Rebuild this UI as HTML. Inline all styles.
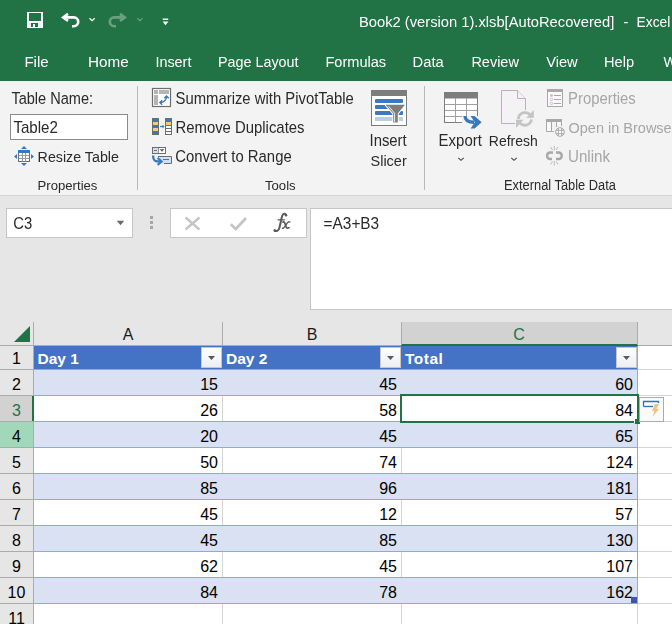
<!DOCTYPE html>
<html><head><meta charset="utf-8">
<style>
*{margin:0;padding:0;box-sizing:border-box}
html,body{width:672px;height:624px;overflow:hidden;background:#fff;font-family:"Liberation Sans",sans-serif}
.a{position:absolute;white-space:nowrap}
svg.a{overflow:visible}
</style></head><body>
<div class="a" style="left:0px;top:0px;width:672px;height:81px;background:#217346;"></div>
<div class="a" style="left:0px;top:81px;width:672px;height:115px;background:#f3f3f3;"></div>
<div class="a" style="left:0px;top:196px;width:672px;height:126px;background:#e6e6e6;"></div>
<div class="a" style="left:0px;top:195px;width:672px;height:1px;background:#d4d4d4;"></div>
<div class="a" style="left:137px;top:86px;width:1px;height:104px;background:#b8b8b8;"></div>
<div class="a" style="left:424px;top:86px;width:1px;height:104px;background:#b8b8b8;"></div>
<div class="a" style="left:10px;top:114px;width:118px;height:26px;background:#fff;border:1px solid #8a8a8a"></div>
<div class="a" style="left:6px;top:208px;width:127px;height:30px;background:#fff;border:1px solid #c6c6c6"></div>
<svg class="a" style="left:116px;top:220px" width="9" height="6" viewBox="0 0 9 6"><polygon points="0.8,0.8 8.2,0.8 4.5,5.2" fill="#6a6a6a"/></svg>
<div class="a" style="left:150px;top:216px;width:3px;height:3px;background:#a6a6a6;"></div>
<div class="a" style="left:150px;top:221px;width:3px;height:3px;background:#a6a6a6;"></div>
<div class="a" style="left:150px;top:226px;width:3px;height:3px;background:#a6a6a6;"></div>
<div class="a" style="left:170px;top:208px;width:137px;height:30px;background:#fff;border:1px solid #c6c6c6"></div>
<svg class="a" style="left:184px;top:216px" width="17" height="15" viewBox="0 0 17 15"><path d="M1.5 1.5 L15.5 13.5 M15.5 1.5 L1.5 13.5" stroke="#c6c6c6" stroke-width="2.5" fill="none"/></svg>
<svg class="a" style="left:229px;top:216px" width="19" height="15" viewBox="0 0 19 15"><path d="M1.8 8.2 L6.8 13 L17 2" stroke="#c4c4c4" stroke-width="2.7" fill="none"/></svg>
<svg class="a" style="left:266px;top:208px" width="30" height="28" viewBox="0 0 30 28"><g transform="translate(-266,-208)" fill="none" stroke="#5a5a5a" stroke-linecap="round"><path d="M286.2 215.2 C285.6 213.4 283.2 213.2 282.2 215.8 C281.2 218.5 280.2 226 279 229 C278.2 231 276.3 231.6 274.8 230.6" stroke-width="2"/><path d="M278 219.8 H284.4" stroke-width="1.2"/><path d="M283 222 C284.2 221.4 284.8 222.6 285.3 224.4 L286.2 227 C286.6 228.4 287.8 228.6 289 227.6" stroke-width="1.7"/><path d="M290 222 C289 221.4 288 222 287 223.4 L284.6 226.8 C283.6 228.2 282.8 228.6 282.4 228.2" stroke-width="1.3"/></g><circle cx="20" cy="7.2" r="1.2" fill="#5a5a5a"/><circle cx="8.8" cy="22.6" r="1.3" fill="#5a5a5a"/></svg>
<div class="a" style="left:310px;top:208px;width:362px;height:102px;background:#fff;border:1px solid #c6c6c6;border-right:none"></div>
<div class="a" style="left:0;top:0;width:672px;height:200px;filter:grayscale(1)">
<div class="a" style="left:359.0px;top:14px;font-size:14.73px;color:#fff;transform:scaleY(1.04);transform-origin:0 13px;">Book2 (version 1).xlsb[AutoRecovered]</div>
<div class="a" style="left:623.5px;top:14px;font-size:14.7px;color:#fff;">-</div>
<div class="a" style="left:636.6px;top:15px;font-size:13.79px;color:#fff;transform:scaleY(1.04);transform-origin:0 12px;">Excel</div>
<div class="a" style="left:24.4px;top:53px;font-size:15.0px;color:#fff;">File</div>
<div class="a" style="left:88.0px;top:53px;font-size:15.25px;color:#fff;">Home</div>
<div class="a" style="left:155.4px;top:54px;font-size:14.41px;color:#fff;">Insert</div>
<div class="a" style="left:218.0px;top:54px;font-size:14.34px;color:#fff;">Page Layout</div>
<div class="a" style="left:325.4px;top:54px;font-size:14.59px;color:#fff;">Formulas</div>
<div class="a" style="left:412.6px;top:54px;font-size:14.72px;color:#fff;">Data</div>
<div class="a" style="left:471.4px;top:54px;font-size:14.49px;color:#fff;">Review</div>
<div class="a" style="left:546.2px;top:54px;font-size:14.66px;color:#fff;">View</div>
<div class="a" style="left:604.0px;top:54px;font-size:14.6px;color:#fff;">Help</div>
<div class="a" style="left:663.5px;top:54px;font-size:14.0px;color:#fff;">W</div>
<div class="a" style="left:11.4px;top:91px;font-size:14.56px;color:#2a2a2a;transform:scaleY(1.07);transform-origin:0 13px;">Table Name:</div>
<div class="a" style="left:37.6px;top:149px;font-size:14.26px;color:#2a2a2a;transform:scaleY(1.07);transform-origin:0 13px;">Resize Table</div>
<div class="a" style="left:37.6px;top:178px;font-size:13.13px;color:#2a2a2a;">Properties</div>
<div class="a" style="left:175.5px;top:91px;font-size:14.86px;color:#2a2a2a;transform:scaleY(1.07);transform-origin:0 13px;">Summarize with PivotTable</div>
<div class="a" style="left:175.5px;top:120px;font-size:14.88px;color:#2a2a2a;transform:scaleY(1.07);transform-origin:0 13px;">Remove Duplicates</div>
<div class="a" style="left:175.2px;top:149px;font-size:14.87px;color:#2a2a2a;transform:scaleY(1.07);transform-origin:0 13px;">Convert to Range</div>
<div class="a" style="left:265.0px;top:178px;font-size:13.14px;color:#2a2a2a;">Tools</div>
<div class="a" style="left:369.5px;top:133px;font-size:14.89px;color:#2a2a2a;transform:scaleY(1.07);transform-origin:0 13px;">Insert</div>
<div class="a" style="left:370.5px;top:153px;font-size:14.49px;color:#2a2a2a;transform:scaleY(1.07);transform-origin:0 13px;">Slicer</div>
<div class="a" style="left:438.6px;top:132px;font-size:14.97px;color:#2a2a2a;transform:scaleY(1.07);transform-origin:0 14px;">Export</div>
<div class="a" style="left:488.8px;top:133px;font-size:13.97px;color:#2a2a2a;transform:scaleY(1.07);transform-origin:0 13px;">Refresh</div>
<div class="a" style="left:568.0px;top:91px;font-size:14.89px;color:#a6a6a6;transform:scaleY(1.07);transform-origin:0 13px;">Properties</div>
<div class="a" style="left:568.5px;top:120px;font-size:14.5px;color:#a6a6a6;transform:scaleY(1.07);transform-origin:0 13px;">Open in Browser</div>
<div class="a" style="left:568.0px;top:148px;font-size:15.17px;color:#a6a6a6;transform:scaleY(1.07);transform-origin:0 14px;">Unlink</div>
<div class="a" style="left:504.0px;top:178px;font-size:12.86px;color:#2a2a2a;transform:scaleY(1.08);transform-origin:0 12px;">External Table Data</div>
</div>
<div class="a" style="left:13.4px;top:119px;font-size:15.1px;color:#2a2a2a;transform:scaleY(1.07);transform-origin:0 14px;">Table2</div>
<div class="a" style="left:13.2px;top:216px;font-size:14.85px;color:#2a2a2a;transform:scaleY(1.07);transform-origin:0 13px;">C3</div>
<div class="a" style="left:323.6px;top:215px;font-size:15.39px;color:#2a2a2a;transform:scaleY(1.07);transform-origin:0 14px;">=A3+B3</div><!-- QAT icons -->
<svg class="a" style="left:0;top:0" width="200" height="40" viewBox="0 0 200 40">
<rect x="27" y="12" width="16" height="16" fill="#fff"/>
<rect x="29" y="13" width="12" height="8" fill="#217346"/>
<rect x="29" y="23" width="12" height="4" fill="#f0f0f0"/>
<rect x="31" y="23" width="7" height="4" fill="#217346"/>
<rect x="33" y="24" width="2" height="3" fill="#fff"/>
<polyline points="68,13.9 63.2,17.4 68,20.9" stroke="#fff" stroke-width="2.6" fill="none"/>
<path d="M63 17.4 H73.8 A4.4 4.4 0 0 1 73.8 26.2 H72" stroke="#fff" stroke-width="2.6" fill="none"/>
<polyline points="89.5,18.3 92.1,20.6 94.7,18.3" stroke="#fff" stroke-width="1.2" fill="none"/>
<g opacity="0.32">
<polyline points="120,13.9 124.8,17.4 120,20.9" stroke="#fff" stroke-width="2.6" fill="none"/>
<path d="M125 17.4 H114.2 A4.4 4.4 0 0 0 114.2 26.2 H116" stroke="#fff" stroke-width="2.6" fill="none"/>
<polyline points="137.3,18.3 139.9,20.6 142.5,18.3" stroke="#fff" stroke-width="1.2" fill="none"/>
</g>
<rect x="162.8" y="18.5" width="5.4" height="1.5" fill="#fff"/>
<polygon points="162.6,21.6 168.4,21.6 165.5,25.2" fill="#fff"/>
</svg>

<!-- ribbon icons -->
<svg class="a" style="left:0;top:81px" width="672" height="114" viewBox="0 81 672 114">
<!-- Resize table -->
<rect x="18.5" y="150.5" width="11" height="11" fill="#fff" stroke="#6d6d6d" stroke-width="1"/>
<rect x="18" y="150" width="12" height="3" fill="#3b78bb"/>
<path d="M18.5 155.5 H29.5 M18.5 158.5 H29.5 M22.5 153 V161.5 M25.5 153 V161.5" stroke="#9a9a9a" stroke-width="1"/>
<polygon points="21,149 24,146 27,149" fill="#3b78bb"/>
<polygon points="21,163 24,166 27,163" fill="#3b78bb"/>
<polygon points="17,154 14,156.5 17,159" fill="#3b78bb"/>
<polygon points="31,154 34,156.5 31,159" fill="#3b78bb"/>
<!-- PivotTable -->
<rect x="152.5" y="88.5" width="18" height="18" fill="#fff" stroke="#6d6d6d" stroke-width="1.2"/>
<rect x="154" y="90" width="4" height="4" fill="#b4b4b4"/>
<rect x="159" y="90" width="10" height="4" fill="#b4b4b4"/>
<rect x="154" y="95" width="4" height="10" fill="#b4b4b4"/>
<path d="M160.3 102.6 A6.2 6.2 0 0 0 166.5 96.4" stroke="#3b78bb" stroke-width="1.4" fill="none"/>
<polyline points="162.2,100.4 160,102.6 162.2,104.8" stroke="#3b78bb" stroke-width="1.5" fill="none"/>
<polyline points="164.3,98.2 166.5,96 168.7,98.2" stroke="#3b78bb" stroke-width="1.5" fill="none"/>
<!-- Remove duplicates -->
<rect x="152.5" y="118.5" width="6" height="16" fill="#3b78bb" stroke="#6d6d6d" stroke-width="1"/>
<rect x="153" y="122" width="5" height="3" fill="#f8ca80"/>
<rect x="153" y="128" width="5" height="3" fill="#f8ca80"/>
<rect x="165.5" y="118.5" width="6" height="16" fill="#fff" stroke="#6d6d6d" stroke-width="1"/>
<rect x="166" y="119" width="5" height="3" fill="#3b78bb"/>
<rect x="166" y="122" width="5" height="3" fill="#f8ca80"/>
<path d="M165.5 125.5 H171.5 M165.5 128.5 H171.5 M165.5 131.5 H171.5" stroke="#6d6d6d" stroke-width="1"/>
<path d="M160 126.5 H163" stroke="#3b78bb" stroke-width="1.2"/>
<polygon points="162.5,124.5 164.5,126.5 162.5,128.5" fill="#3b78bb"/>
<!-- Convert to range -->
<rect x="152.5" y="147.5" width="13" height="6" fill="#fff" stroke="#6d6d6d" stroke-width="1"/>
<rect x="153" y="148" width="5" height="5" fill="#cde0f5"/>
<path d="M158.5 148 V153" stroke="#9a9a9a" stroke-width="1"/>
<path d="M154 150.5 H157" stroke="#6d6d6d" stroke-width="1"/>
<polygon points="159.7,149 164.3,149 162,152" fill="#6d6d6d"/>
<rect x="160" y="156.5" width="11.5" height="7" fill="#cde0f5"/>
<path d="M158 156.5 H171.5 V163.5 H164" stroke="#6d6d6d" stroke-width="1" fill="none"/>
<path d="M163 159.5 H169" stroke="#6d6d6d" stroke-width="1"/>
<path d="M153.2 155.6 V157 A4.4 4.4 0 0 0 157.6 161.4 H161" stroke="#3b78bb" stroke-width="2.3" fill="none"/>
<polyline points="157.6,157.9 161.6,161.4 157.6,164.9" stroke="#3b78bb" stroke-width="2.1" fill="none"/>
<!-- Insert slicer -->
<rect x="371.5" y="90.5" width="35" height="35" fill="#fff" stroke="#7a7a7a" stroke-width="1"/>
<rect x="371" y="90" width="36" height="6" fill="#7d7d7d"/>
<rect x="375" y="99" width="28" height="4" rx="1" fill="#3c7ac0"/>
<rect x="375" y="105" width="28" height="4" rx="1" fill="#3c7ac0"/>
<rect x="375" y="111" width="28" height="4" rx="1" fill="#3c7ac0"/>
<rect x="375" y="117" width="28" height="4" fill="#b9cde5"/>
<polygon points="385.5,104.8 405,104.8 397.8,113.6 397.8,122.6 393.2,122.6 393.2,113.6" fill="#7d7d7d" stroke="#fff" stroke-width="1.8" stroke-linejoin="round"/>
<polygon points="385.5,104.8 405,104.8 397.8,113.6 397.8,122.6 393.2,122.6 393.2,113.6" fill="#7d7d7d"/>
<polyline points="388.6,106.2 394.6,113.3 394.6,121.8" stroke="#fff" stroke-width="0.9" fill="none"/>
<!-- Export -->
<rect x="444.5" y="92.5" width="33" height="30" fill="#fff" stroke="#7d7d7d" stroke-width="1"/>
<rect x="444" y="92" width="34" height="6.5" fill="#7d7d7d"/>
<path d="M455.5 98 V122.5 M466.5 98 V116 M445 104.5 H477.5 M445 110.5 H477.5 M445 116.5 H463" stroke="#a0a0a0" stroke-width="1"/>
<rect x="462" y="116" width="20" height="13" fill="#f3f3f3"/>
<rect x="477" y="110" width="1" height="6" fill="#7d7d7d"/>
<path d="M465 116 Q465.2 122.3 474 122.3" stroke="#3b78bb" stroke-width="3.4" fill="none"/>
<polygon points="470.6,116 474.6,116 481.6,122.2 474.6,128.4 470.6,128.4 474.8,122.2" fill="#3b78bb"/>
<!-- Refresh -->
<path d="M501.5 90.5 H517.5 L525.5 98.5 V110 M501.5 90.5 V123.5 H515" stroke="#b4b4b4" stroke-width="1" fill="#f6f1f6"/>
<path d="M517.5 90.5 V98.5 H525.5" stroke="#b4b4b4" stroke-width="1" fill="#f6f1f6"/>
<path d="M518.3 119 A6.6 6.6 0 0 1 531.3 117.6" stroke="#c4c4c4" stroke-width="2.9" fill="none"/>
<path d="M531.5 119.5 A6.6 6.6 0 0 1 518.5 120" stroke="#c4c4c4" stroke-width="2.9" fill="none"/>
<polygon points="533.8,110 533.8,117.8 526.3,117.8" fill="#c4c4c4"/>
<polygon points="516,128 516,119.7 523.5,119.7" fill="#c4c4c4"/>
<!-- chevrons export/refresh -->
<polyline points="458.3,157.8 461,160.3 463.7,157.8" stroke="#444" stroke-width="1.1" fill="none"/>
<polyline points="511.3,157.8 514,160.3 516.7,157.8" stroke="#444" stroke-width="1.1" fill="none"/>
<!-- Properties (disabled) -->
<rect x="547.5" y="89.5" width="15" height="17" fill="#fcf8fc" stroke="#a8a8a8" stroke-width="1"/>
<rect x="547" y="89" width="16" height="3" fill="#a8a8a8"/>
<circle cx="551.5" cy="95.5" r="1.3" fill="#b8b8b8"/>
<circle cx="551.5" cy="99.5" r="1.2" stroke="#b8b8b8" stroke-width="0.8" fill="none"/>
<circle cx="551.5" cy="103.5" r="1.2" stroke="#b8b8b8" stroke-width="0.8" fill="none"/>
<path d="M554 95.5 H561 M554 99.5 H561 M554 103.5 H561" stroke="#a8a8a8" stroke-width="1"/>
<!-- Open in browser -->
<path d="M546.5 119.5 H561.5 V126 M546.5 119.5 V131.5 H554" stroke="#a8a8a8" stroke-width="1" fill="#fcf8fc"/>
<rect x="546" y="119" width="16" height="3" fill="#a8a8a8"/>
<path d="M551.5 122 V131 M556.5 122 V127" stroke="#a8a8a8" stroke-width="1"/>
<circle cx="560" cy="132" r="5.2" fill="#f3f3f3"/>
<circle cx="560" cy="132" r="4.3" fill="#fff" stroke="#a8a8a8" stroke-width="1"/>
<path d="M556 130.3 H564 M556 133.7 H564 M558.3 128 V136 M561.7 128 V136" stroke="#a8a8a8" stroke-width="1"/>
<!-- Unlink -->
<path d="M553 152.5 H549.8 A3.3 3.3 0 0 0 549.8 159 H552" stroke="#a8a8a8" stroke-width="2.4" fill="none"/>
<path d="M556 152.5 H559 A3.3 3.3 0 0 1 559 159 H556" stroke="#a8a8a8" stroke-width="2.4" fill="none"/>
<path d="M554.3 146 V150.5 M550.5 147 L552.5 150 M558 147 L556.2 150 M554.3 161 V165.5 M550.5 164.5 L552.5 161.5 M558 164.5 L556.2 161.5" stroke="#b4b4b4" stroke-width="0.9"/>
</svg>
<div class="a" style="left:0px;top:322px;width:672px;height:302px;background:#ffffff;"></div>
<div class="a" style="left:0px;top:322px;width:672px;height:23px;background:#e6e6e6;"></div>
<div class="a" style="left:0px;top:345px;width:672px;height:1px;background:#ababab;"></div>
<div class="a" style="left:0px;top:346px;width:33px;height:278px;background:#e6e6e6;"></div>
<div class="a" style="left:33px;top:322px;width:1px;height:302px;background:#ababab;"></div>
<div class="a" style="left:402px;top:322px;width:235px;height:22px;background:#d2d2d2;"></div>
<div class="a" style="left:401px;top:344px;width:237px;height:2px;background:#217346;"></div>
<div class="a" style="left:222px;top:322px;width:1px;height:23px;background:#ababab;"></div>
<div class="a" style="left:401px;top:322px;width:1px;height:23px;background:#ababab;"></div>
<div class="a" style="left:637px;top:322px;width:1px;height:23px;background:#ababab;"></div>
<svg class="a" style="left:0;top:322px" width="33" height="23"><polygon points="14,20 30,20 30,4" fill="#217346"/></svg>
<div class="a" style="left:108px;top:326px;width:40px;text-align:center;font-size:16px;color:#1a1a1a">A</div>
<div class="a" style="left:292px;top:326px;width:40px;text-align:center;font-size:16px;color:#1a1a1a">B</div>
<div class="a" style="left:499px;top:326px;width:40px;text-align:center;font-size:16px;color:#217346">C</div>
<div class="a" style="left:222px;top:346px;width:1px;height:278px;background:#d4d4d4;"></div>
<div class="a" style="left:401px;top:346px;width:1px;height:278px;background:#d4d4d4;"></div>
<div class="a" style="left:637px;top:346px;width:1px;height:278px;background:#d4d4d4;"></div>
<div class="a" style="left:638px;top:369px;width:34px;height:1px;background:#d4d4d4;"></div>
<div class="a" style="left:638px;top:395px;width:34px;height:1px;background:#d4d4d4;"></div>
<div class="a" style="left:638px;top:421px;width:34px;height:1px;background:#d4d4d4;"></div>
<div class="a" style="left:638px;top:447px;width:34px;height:1px;background:#d4d4d4;"></div>
<div class="a" style="left:638px;top:473px;width:34px;height:1px;background:#d4d4d4;"></div>
<div class="a" style="left:638px;top:499px;width:34px;height:1px;background:#d4d4d4;"></div>
<div class="a" style="left:638px;top:525px;width:34px;height:1px;background:#d4d4d4;"></div>
<div class="a" style="left:638px;top:551px;width:34px;height:1px;background:#d4d4d4;"></div>
<div class="a" style="left:638px;top:577px;width:34px;height:1px;background:#d4d4d4;"></div>
<div class="a" style="left:638px;top:603px;width:34px;height:1px;background:#d4d4d4;"></div>
<div class="a" style="left:638px;top:629px;width:34px;height:1px;background:#d4d4d4;"></div>
<div class="a" style="left:0px;top:369px;width:33px;height:1px;background:#ababab;"></div>
<div class="a" style="left:0px;top:395px;width:33px;height:1px;background:#ababab;"></div>
<div class="a" style="left:0px;top:421px;width:33px;height:1px;background:#ababab;"></div>
<div class="a" style="left:0px;top:447px;width:33px;height:1px;background:#ababab;"></div>
<div class="a" style="left:0px;top:473px;width:33px;height:1px;background:#ababab;"></div>
<div class="a" style="left:0px;top:499px;width:33px;height:1px;background:#ababab;"></div>
<div class="a" style="left:0px;top:525px;width:33px;height:1px;background:#ababab;"></div>
<div class="a" style="left:0px;top:551px;width:33px;height:1px;background:#ababab;"></div>
<div class="a" style="left:0px;top:577px;width:33px;height:1px;background:#ababab;"></div>
<div class="a" style="left:0px;top:603px;width:33px;height:1px;background:#ababab;"></div>
<div class="a" style="left:0px;top:629px;width:33px;height:1px;background:#ababab;"></div>
<div class="a" style="left:34px;top:346px;width:603px;height:23px;background:#4472c4;"></div>
<div class="a" style="left:34px;top:369px;width:604px;height:1px;background:#8ea9db;"></div>
<div class="a" style="left:34px;top:370px;width:603px;height:25px;background:#d9e1f2;"></div>
<div class="a" style="left:34px;top:395px;width:604px;height:1px;background:#8ea9db;"></div>
<div class="a" style="left:34px;top:421px;width:604px;height:1px;background:#8ea9db;"></div>
<div class="a" style="left:34px;top:422px;width:603px;height:25px;background:#d9e1f2;"></div>
<div class="a" style="left:34px;top:447px;width:604px;height:1px;background:#8ea9db;"></div>
<div class="a" style="left:34px;top:473px;width:604px;height:1px;background:#8ea9db;"></div>
<div class="a" style="left:34px;top:474px;width:603px;height:25px;background:#d9e1f2;"></div>
<div class="a" style="left:34px;top:499px;width:604px;height:1px;background:#8ea9db;"></div>
<div class="a" style="left:34px;top:525px;width:604px;height:1px;background:#8ea9db;"></div>
<div class="a" style="left:34px;top:526px;width:603px;height:25px;background:#d9e1f2;"></div>
<div class="a" style="left:34px;top:551px;width:604px;height:1px;background:#8ea9db;"></div>
<div class="a" style="left:34px;top:577px;width:604px;height:1px;background:#8ea9db;"></div>
<div class="a" style="left:34px;top:578px;width:603px;height:25px;background:#d9e1f2;"></div>
<div class="a" style="left:34px;top:603px;width:604px;height:1px;background:#8ea9db;"></div>
<div class="a" style="left:637px;top:346px;width:1px;height:258px;background:#8ea9db;"></div>
<div class="a" style="left:0px;top:396px;width:32px;height:25px;background:#d2d2d2;"></div>
<div class="a" style="left:32px;top:396px;width:2px;height:25px;background:#217346;"></div>
<div class="a" style="left:0px;top:422px;width:33px;height:25px;background:#a0d8b9;"></div>
<div class="a" style="left:0;top:347px;width:33px;height:23px;line-height:23px;text-align:center;font-size:16px;color:#000">1</div>
<div class="a" style="left:0;top:372px;width:33px;height:25px;line-height:25px;text-align:center;font-size:16px;color:#000">2</div>
<div class="a" style="left:0;top:398px;width:33px;height:25px;line-height:25px;text-align:center;font-size:16px;color:#217346">3</div>
<div class="a" style="left:0;top:424px;width:33px;height:25px;line-height:25px;text-align:center;font-size:16px;color:#000">4</div>
<div class="a" style="left:0;top:450px;width:33px;height:25px;line-height:25px;text-align:center;font-size:16px;color:#000">5</div>
<div class="a" style="left:0;top:476px;width:33px;height:25px;line-height:25px;text-align:center;font-size:16px;color:#000">6</div>
<div class="a" style="left:0;top:502px;width:33px;height:25px;line-height:25px;text-align:center;font-size:16px;color:#000">7</div>
<div class="a" style="left:0;top:528px;width:33px;height:25px;line-height:25px;text-align:center;font-size:16px;color:#000">8</div>
<div class="a" style="left:0;top:554px;width:33px;height:25px;line-height:25px;text-align:center;font-size:16px;color:#000">9</div>
<div class="a" style="left:0;top:580px;width:33px;height:25px;line-height:25px;text-align:center;font-size:16px;color:#000">10</div>
<div class="a" style="left:0;top:606px;width:33px;height:25px;line-height:25px;text-align:center;font-size:16px;color:#000">11</div>
<div class="a" style="left:37.5px;top:350px;font-size:15.5px;font-weight:bold;color:#fff;letter-spacing:0px">Day 1</div>
<div class="a" style="left:226px;top:350px;font-size:15.5px;font-weight:bold;color:#fff;letter-spacing:0px">Day 2</div>
<div class="a" style="left:405px;top:350px;font-size:15.5px;font-weight:bold;color:#fff;letter-spacing:0.5px">Total</div>
<div class="a" style="left:201px;top:347px;width:21px;height:21px;border:1px solid #c6c6c6;background:linear-gradient(#ffffff,#eceef2)"></div>
<svg class="a" style="left:208px;top:356px" width="7" height="4"><polygon points="0,0 7,0 3.5,4" fill="#595959"/></svg>
<div class="a" style="left:380px;top:347px;width:21px;height:21px;border:1px solid #c6c6c6;background:linear-gradient(#ffffff,#eceef2)"></div>
<svg class="a" style="left:387px;top:356px" width="7" height="4"><polygon points="0,0 7,0 3.5,4" fill="#595959"/></svg>
<div class="a" style="left:616px;top:347px;width:21px;height:21px;border:1px solid #c6c6c6;background:linear-gradient(#ffffff,#eceef2)"></div>
<svg class="a" style="left:623px;top:356px" width="7" height="4"><polygon points="0,0 7,0 3.5,4" fill="#595959"/></svg>
<div class="a" style="left:118px;top:376px;width:100px;text-align:right;font-size:16px;color:#000">15</div>
<div class="a" style="left:297px;top:376px;width:100px;text-align:right;font-size:16px;color:#000">45</div>
<div class="a" style="left:533px;top:376px;width:100px;text-align:right;font-size:16px;color:#000">60</div>
<div class="a" style="left:118px;top:402px;width:100px;text-align:right;font-size:16px;color:#000">26</div>
<div class="a" style="left:297px;top:402px;width:100px;text-align:right;font-size:16px;color:#000">58</div>
<div class="a" style="left:533px;top:402px;width:100px;text-align:right;font-size:16px;color:#000">84</div>
<div class="a" style="left:118px;top:428px;width:100px;text-align:right;font-size:16px;color:#000">20</div>
<div class="a" style="left:297px;top:428px;width:100px;text-align:right;font-size:16px;color:#000">45</div>
<div class="a" style="left:533px;top:428px;width:100px;text-align:right;font-size:16px;color:#000">65</div>
<div class="a" style="left:118px;top:454px;width:100px;text-align:right;font-size:16px;color:#000">50</div>
<div class="a" style="left:297px;top:454px;width:100px;text-align:right;font-size:16px;color:#000">74</div>
<div class="a" style="left:533px;top:454px;width:100px;text-align:right;font-size:16px;color:#000">124</div>
<div class="a" style="left:118px;top:480px;width:100px;text-align:right;font-size:16px;color:#000">85</div>
<div class="a" style="left:297px;top:480px;width:100px;text-align:right;font-size:16px;color:#000">96</div>
<div class="a" style="left:533px;top:480px;width:100px;text-align:right;font-size:16px;color:#000">181</div>
<div class="a" style="left:118px;top:506px;width:100px;text-align:right;font-size:16px;color:#000">45</div>
<div class="a" style="left:297px;top:506px;width:100px;text-align:right;font-size:16px;color:#000">12</div>
<div class="a" style="left:533px;top:506px;width:100px;text-align:right;font-size:16px;color:#000">57</div>
<div class="a" style="left:118px;top:532px;width:100px;text-align:right;font-size:16px;color:#000">45</div>
<div class="a" style="left:297px;top:532px;width:100px;text-align:right;font-size:16px;color:#000">85</div>
<div class="a" style="left:533px;top:532px;width:100px;text-align:right;font-size:16px;color:#000">130</div>
<div class="a" style="left:118px;top:558px;width:100px;text-align:right;font-size:16px;color:#000">62</div>
<div class="a" style="left:297px;top:558px;width:100px;text-align:right;font-size:16px;color:#000">45</div>
<div class="a" style="left:533px;top:558px;width:100px;text-align:right;font-size:16px;color:#000">107</div>
<div class="a" style="left:118px;top:584px;width:100px;text-align:right;font-size:16px;color:#000">84</div>
<div class="a" style="left:297px;top:584px;width:100px;text-align:right;font-size:16px;color:#000">78</div>
<div class="a" style="left:533px;top:584px;width:100px;text-align:right;font-size:16px;color:#000">162</div>
<div class="a" style="left:400px;top:394px;width:239px;height:29px;border:2px solid #217346"></div>
<div class="a" style="left:634px;top:419px;width:2px;height:4px;background:#ffffff;"></div>
<div class="a" style="left:635px;top:419px;width:5px;height:5px;background:#217346;"></div>
<div class="a" style="left:631px;top:597px;width:6px;height:6px;background:#4351b2;"></div>
<div class="a" style="left:639px;top:397px;width:25px;height:25px;border:1px solid #ababab;background:#fafafa"></div>
<svg class="a" style="left:640px;top:398px" width="23" height="23"><path d="M3.5 8.5 V3.5 H18.5 V5" fill="none" stroke="#2e75b6" stroke-width="1.3"/><path d="M3.5 8.5 H13" fill="none" stroke="#2e75b6" stroke-width="1.3"/><polygon points="15,6 19,6 16.5,11 19,11 12.5,19 14.5,13 12,13" fill="#f2c080"/></svg>
</body></html>
